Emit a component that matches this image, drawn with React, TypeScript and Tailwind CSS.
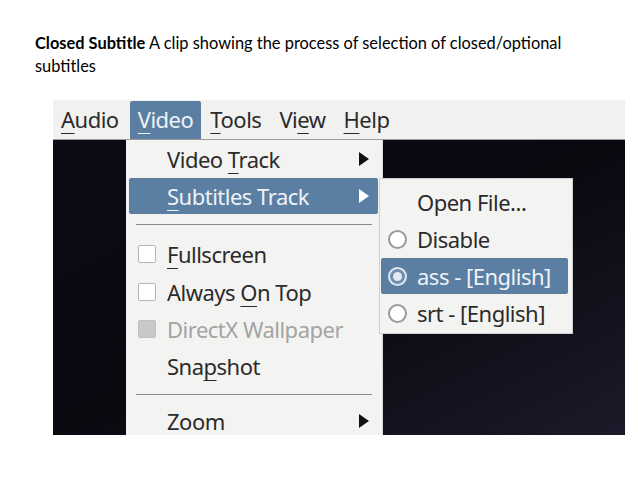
import React from 'react';

const menuFont = { fontFamily: '"Noto Sans", "Open Sans", sans-serif' };

function Mn({ children }: { children: React.ReactNode }) {
  return <span className="underline decoration-1 underline-offset-[5px]">{children}</span>;
}

function Arrow({ light }: { light?: boolean }) {
  return (
    <svg width="12" height="16" viewBox="0 0 12 16" className="shrink-0">
      <path d="M1 1 L11 8 L1 15 Z" fill={light ? '#ffffff' : '#111111'} />
    </svg>
  );
}

function Check({ disabled }: { disabled?: boolean }) {
  return (
    <span
      className={`inline-block w-[18px] h-[18px] rounded-[2px] border ${
        disabled ? 'bg-[#c8c8c8] border-[#c0c0c0]' : 'bg-white border-[#b5b5b5]'
      }`}
    />
  );
}

function Radio({ checked }: { checked?: boolean }) {
  return (
    <span
      className={`inline-flex items-center justify-center w-[19px] h-[19px] rounded-full border-2 ${
        checked ? 'border-[#dfe6ee] bg-[#6f8eb0]' : 'border-[#9a9a9a] bg-white'
      }`}
    >
      {checked && <span className="w-[9px] h-[9px] rounded-full bg-[#e4e9ef]" />}
    </span>
  );
}

export default function App() {
  return (
    <div className="w-[638px] h-[478px] bg-white relative overflow-hidden">
      <p
        className="pl-[35px] pr-[40px] pt-[31px] text-[16.4px] leading-[23px] text-black"
        style={{ fontFamily: 'Lato, "Open Sans", sans-serif' }}
      >
        <b>Closed Subtitle</b> A clip showing the process of selection of closed/optional subtitles
      </p>

      <div
        className="absolute left-[53px] top-[100px] w-[572px] h-[335px] flex flex-col bg-[#0c0910] text-[#2b2b2b] tracking-[-0.5px]"
        style={menuFont}
      >
        <div className="h-[40px] bg-[#f1f1f0] border-b border-[#9c9c9c] flex items-end text-[22px] leading-none">
          <div className="flex items-center h-[39px] pl-[8px] pr-[11px] pb-[2px]">
            <span><Mn>A</Mn>udio</span>
          </div>
          <div className="flex items-center h-[38px] px-[8px] pb-[2px] bg-[#5b7fa3] text-[#eef2f6] rounded-t-[2px]">
            <span><Mn>V</Mn>ideo</span>
          </div>
          <div className="flex items-center h-[39px] px-[9px] pb-[2px]">
            <span><Mn>T</Mn>ools</span>
          </div>
          <div className="flex items-center h-[39px] px-[9px] pb-[2px]">
            <span>Vi<Mn>e</Mn>w</span>
          </div>
          <div className="flex items-center h-[39px] px-[9px] pb-[2px]">
            <span><Mn>H</Mn>elp</span>
          </div>
        </div>

        <div className="flex-1 bg-gradient-to-br from-[#0e0a16] via-[#0b0810] to-[#1c1a2a]" />

        {/* Video menu */}
        <div className="absolute left-[73px] top-[40px] w-[257px] h-[295px] overflow-hidden bg-[#f3f3f2] border-r border-[#d8d8d8] text-[22px] leading-none">
          <div className="h-[38px] flex items-center justify-between pl-[41px] pr-[12px]">
            <span>Video <Mn>T</Mn>rack</span>
            <Arrow />
          </div>
          <div className="h-[36px] ml-[3px] mr-[4px] flex items-center justify-between pl-[38px] pr-[8px] bg-[#5b7fa3] text-[#eef2f6] rounded-[2px]">
            <span><Mn>S</Mn>ubtitles Track</span>
            <Arrow light />
          </div>
          <div className="h-[21px] flex items-center px-[10px]">
            <div className="w-full h-px bg-[#8a8a8a]" />
          </div>
          <div className="h-[38px] flex items-center pl-[12px] gap-[11px]">
            <Check />
            <span><Mn>F</Mn>ullscreen</span>
          </div>
          <div className="h-[37px] flex items-center pl-[12px] gap-[11px]">
            <Check />
            <span>Always <Mn>O</Mn>n Top</span>
          </div>
          <div className="h-[38px] flex items-center pl-[12px] gap-[11px] text-[#a3a3a3]">
            <Check disabled />
            <span>DirectX Wallpaper</span>
          </div>
          <div className="h-[36px] flex items-center pl-[41px]">
            <span>Sna<Mn>p</Mn>shot</span>
          </div>
          <div className="h-[20px] flex items-center px-[10px]">
            <div className="w-full h-px bg-[#8a8a8a]" />
          </div>
          <div className="h-[34px] shrink-0 flex items-center justify-between pl-[41px] pr-[12px]">
            <span>Zoom</span>
            <Arrow />
          </div>
        </div>

        {/* Subtitles submenu */}
        <div className="absolute left-[326px] top-[78px] w-[194px] h-[156px] bg-[#f3f3f2] border border-[#d0d0d0] text-[22px] leading-none pt-[4px]">
          <div className="h-[37px] flex items-center pl-[37px]">
            <span>Open File...</span>
          </div>
          <div className="h-[38px] flex items-center pl-[8px] gap-[10px]">
            <Radio />
            <span>Disable</span>
          </div>
          <div className="h-[36px] mx-[1px] mr-[4px] flex items-center pl-[7px] gap-[10px] bg-[#5b7fa3] text-[#eef2f6] rounded-[2px]">
            <Radio checked />
            <span>ass - [English]</span>
          </div>
          <div className="h-[38px] flex items-center pl-[8px] gap-[10px]">
            <Radio />
            <span>srt - [English]</span>
          </div>
        </div>
      </div>
    </div>
  );
}
